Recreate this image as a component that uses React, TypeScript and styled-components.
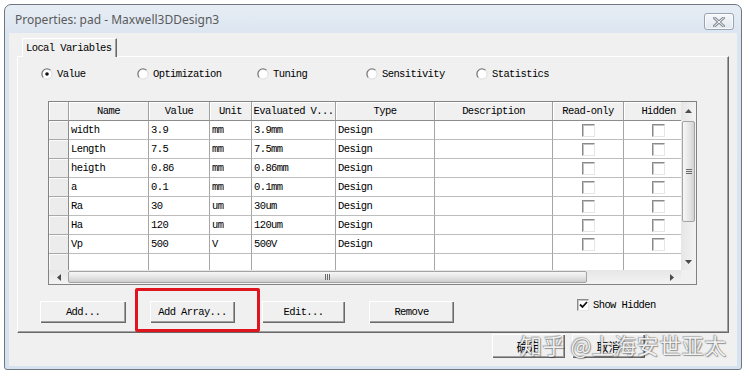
import React from 'react';
import styled, { createGlobalStyle } from 'styled-components';

const MONO = `'Liberation Mono', 'DejaVu Sans Mono', monospace`;
const CJK = `'Noto Sans CJK SC', 'Noto Sans', sans-serif`;

const GlobalStyle = createGlobalStyle`
  html, body {
    margin: 0;
    padding: 0;
    background: #ffffff;
  }
  body {
    font-family: ${MONO};
  }
`;

const radios = [
  { label: 'Value', w: 96, checked: true },
  { label: 'Optimization', w: 120 },
  { label: 'Tuning', w: 109 },
  { label: 'Sensitivity', w: 110 },
  { label: 'Statistics', w: 110 },
];

const headers = ['', 'Name', 'Value', 'Unit', 'Evaluated V...', 'Type', 'Description', 'Read-only', 'Hidden'];

const rows = [
  ['width', '3.9', 'mm', '3.9mm'],
  ['Length', '7.5', 'mm', '7.5mm'],
  ['heigth', '0.86', 'mm', '0.86mm'],
  ['a', '0.1', 'mm', '0.1mm'],
  ['Ra', '30', 'um', '30um'],
  ['Ha', '120', 'um', '120um'],
  ['Vp', '500', 'V', '500V'],
];

function RadioIcon({ checked }: { checked?: boolean }) {
  return (
    <svg width="12" height="12" viewBox="0 0 12 12">
      <circle cx="6" cy="6" r="5" fill="#fff" />
      <path d="M9.6 2.4 A5 5 0 0 0 2.4 9.6" fill="none" stroke="#7a7a7a" strokeWidth="1.3" />
      <path d="M9.6 2.4 A5 5 0 0 1 2.4 9.6" fill="none" stroke="#dcdcdc" strokeWidth="1" />
      {checked && <circle cx="6" cy="6" r="1.8" fill="#111" />}
    </svg>
  );
}

function Arrow({ dir }: { dir: 'up' | 'down' | 'left' | 'right' }) {
  const d = {
    up: 'M0 4 L3.5 0 L7 4 Z',
    down: 'M0 0 L7 0 L3.5 4 Z',
    left: 'M4 0 L4 7 L0 3.5 Z',
    right: 'M0 0 L4 3.5 L0 7 Z',
  }[dir];
  const vertical = dir === 'up' || dir === 'down';
  return (
    <svg width={vertical ? 7 : 4} height={vertical ? 4 : 7} viewBox={vertical ? '0 0 7 4' : '0 0 4 7'}>
      <path d={d} fill="#4a4a4a" />
    </svg>
  );
}

function CloseGlyph() {
  return (
    <svg width="12" height="10" viewBox="0 0 12 10">
      <path d="M1.5 1 L10.5 9 M10.5 1 L1.5 9" stroke="#8a919b" strokeWidth="3" strokeLinecap="square" />
      <path d="M1.5 1 L10.5 9 M10.5 1 L1.5 9" stroke="#f4f6f9" strokeWidth="1" strokeLinecap="square" />
    </svg>
  );
}

function CheckMark() {
  return (
    <svg width="9" height="8" viewBox="0 0 9 8">
      <path d="M1 3.5 L3.5 6 L8 1" fill="none" stroke="#111" strokeWidth="1.8" />
    </svg>
  );
}

export default function App() {
  return (
    <>
      <GlobalStyle />
      <Window>
        <TitleBar>
          <TitleText>Properties: pad - Maxwell3DDesign3</TitleText>
          <CloseButton>
            <CloseGlyph />
          </CloseButton>
        </TitleBar>
        <Client>
          <Tab>Local Variables</Tab>
          <Panel>
            <RadioRow>
              {radios.map(r => (
                <RadioItem key={r.label} $w={r.w}>
                  <RadioIcon checked={r.checked} />
                  <span>{r.label}</span>
                </RadioItem>
              ))}
            </RadioRow>
            <GridFrame>
              <Viewport>
                <Table>
                  {headers.map((h, i) => (
                    <HeadCell key={'h' + i}>{h}</HeadCell>
                  ))}
                  {rows.map(r => (
                    <React.Fragment key={r[0]}>
                      <RowHead />
                      {r.map((v, i) => (
                        <Cell key={i}>{v}</Cell>
                      ))}
                      <Cell>Design</Cell>
                      <Cell />
                      <CheckCell>
                        <Box />
                      </CheckCell>
                      <CheckCell>
                        <Box />
                      </CheckCell>
                    </React.Fragment>
                  ))}
                  <RowHead />
                  {Array.from({ length: 8 }).map((_, i) => (
                    <Cell key={'e' + i} />
                  ))}
                </Table>
              </Viewport>
              <VScroll>
                <ArrowButton $h={17}>
                  <Arrow dir="up" />
                </ArrowButton>
                <VThumb>
                  <VGrip>
                    <span />
                    <span />
                    <span />
                  </VGrip>
                </VThumb>
                <Track />
                <ArrowButton $h={17}>
                  <Arrow dir="down" />
                </ArrowButton>
              </VScroll>
              <HScroll>
                <ArrowButton $w={19}>
                  <Arrow dir="left" />
                </ArrowButton>
                <HThumb>
                  <HGrip>
                    <span />
                    <span />
                    <span />
                  </HGrip>
                </HThumb>
                <Track />
                <ArrowButton $w={18}>
                  <Arrow dir="right" />
                </ArrowButton>
              </HScroll>
              <Corner />
            </GridFrame>
            <ButtonRow>
              <Button $w={86}>Add...</Button>
              <Button $w={85} $ml={24}>Add Array...</Button>
              <Button $w={83} $ml={27}>Edit...</Button>
              <Button $w={85} $ml={24}>Remove</Button>
              <ShowHidden>
                <CheckBox>
                  <CheckMark />
                </CheckBox>
                <span>Show Hidden</span>
              </ShowHidden>
            </ButtonRow>
            <RedMark />
          </Panel>
          <DialogButtons>
            <DialogButton>确定</DialogButton>
            <DialogButton>取消</DialogButton>
          </DialogButtons>
          <Watermark>知乎 @上海安世亚太</Watermark>
        </Client>
      </Window>
    </>
  );
}

const Window = styled.div`
  margin: 4px 0 0 4px;
  width: 738px;
  height: 366px;
  box-sizing: border-box;
  border: 1px solid #6f7782;
  border-radius: 7px 7px 3px 3px;
  background: linear-gradient(#e7edf4, #dbe5f0 30px, #d6e2ef);
  display: flex;
  flex-direction: column;
  overflow: hidden;
`;
const TitleBar = styled.div`
  height: 28px;
  flex: none;
  display: flex;
  justify-content: space-between;
  align-items: flex-start;
`;
const TitleText = styled.div`
  padding: 7px 0 0 10px;
  font-family: 'Noto Sans', sans-serif;
  font-size: 12px;
  line-height: 16px;
  color: #5a5a5a;
`;
const CloseButton = styled.div`
  margin: 8px 7px 0 0;
  width: 30px;
  height: 17px;
  box-sizing: border-box;
  border: 1px solid #97a3b3;
  border-radius: 3px;
  background: linear-gradient(#f6f8fb, #e2e8ef);
  box-shadow: inset 0 0 0 1px rgba(255, 255, 255, 0.7);
  display: flex;
  align-items: center;
  justify-content: center;
`;
const Client = styled.div`
  position: relative;
  flex: 1;
  margin: 0 4px 3px;
  padding: 5px 8px 0;
  background: #f0f0f0;
  display: flex;
  flex-direction: column;
  font-family: ${MONO};
  font-size: 10.5px;
  letter-spacing: -0.6px;
  color: #000;
`;
const Tab = styled.div`
  position: relative;
  z-index: 1;
  align-self: flex-start;
  margin: 0 0 -1px 5px;
  width: 95px;
  height: 19px;
  box-sizing: border-box;
  padding: 3px 0 0 3px;
  background: #f0f0f0;
  border-top: 1px solid #fff;
  border-left: 1px solid #fff;
  border-right: 1px solid #696969;
  box-shadow: inset -1px 0 #a0a0a0;
  line-height: 13px;
`;
const Panel = styled.div`
  position: relative;
  height: 277px;
  box-sizing: border-box;
  border: 1px solid;
  border-color: #fff #696969 #696969 #fff;
  box-shadow: inset -1px -1px #a0a0a0;
`;
const RadioRow = styled.div`
  margin: 10px 0 0 23px;
  height: 14px;
  display: flex;
  align-items: center;
`;
const RadioItem = styled.div<{ $w: number }>`
  width: ${p => p.$w}px;
  display: flex;
  align-items: center;
  gap: 4px;
  & span {
    line-height: 12px;
  }
`;
const GridFrame = styled.div`
  margin: 20px 0 0 30px;
  width: 649px;
  height: 184px;
  box-sizing: border-box;
  border: 1px solid #838383;
  display: grid;
  grid-template-columns: 632px 15px;
  grid-template-rows: 168px 14px;
`;
const Viewport = styled.div`
  overflow: hidden;
  background: #fff;
`;
const Table = styled.div`
  width: 645px;
  display: grid;
  grid-template-columns: 20px 80px 61px 42px 84px 99px 118px 71px 70px;
  grid-auto-rows: 19px;
`;
const HeadCell = styled.div`
  box-sizing: border-box;
  background: #f0f0f0;
  border-right: 1px solid #a0a0a0;
  border-bottom: 1px solid #8c8c8c;
  box-shadow: inset 1px 1px #fff;
  text-align: center;
  line-height: 18px;
  white-space: nowrap;
  overflow: hidden;
`;
const RowHead = styled.div`
  box-sizing: border-box;
  background: #ececec;
  border-right: 1px solid #8c8c8c;
  border-bottom: 1px solid #a8a8a8;
  box-shadow: inset 1px 1px #fbfbfb;
`;
const Cell = styled.div`
  box-sizing: border-box;
  padding-left: 2px;
  border-right: 1px solid #a6a6a6;
  border-bottom: 1px solid #bdbdbd;
  line-height: 18px;
  white-space: nowrap;
  overflow: hidden;
`;
const CheckCell = styled(Cell)`
  padding: 0;
  display: flex;
  align-items: center;
  justify-content: center;
`;
const Box = styled.div`
  width: 13px;
  height: 13px;
  box-sizing: border-box;
  background: #fff;
  border: 1px solid;
  border-color: #8a8a8a #e6e6e6 #e6e6e6 #8a8a8a;
  box-shadow: inset 1px 1px #c4c4c4;
`;
const VScroll = styled.div`
  display: flex;
  flex-direction: column;
  background: linear-gradient(90deg, #e6e6e6, #f3f3f3);
`;
const HScroll = styled.div`
  display: flex;
  background: linear-gradient(#e6e6e6, #f3f3f3);
`;
const ArrowButton = styled.div<{ $w?: number; $h?: number }>`
  flex: none;
  width: ${p => (p.$w ? `${p.$w}px` : 'auto')};
  height: ${p => (p.$h ? `${p.$h}px` : 'auto')};
  display: flex;
  align-items: center;
  justify-content: center;
`;
const Track = styled.div`
  flex: 1;
`;
const VThumb = styled.div`
  margin: 2px 1px 0;
  height: 101px;
  box-sizing: border-box;
  border: 1px solid #a3a3a3;
  border-radius: 2px;
  background: linear-gradient(90deg, #f7f7f7, #e4e4e4 60%, #d2d2d2);
  display: flex;
  align-items: center;
  justify-content: center;
`;
const VGrip = styled.div`
  display: flex;
  flex-direction: column;
  gap: 1px;
  & span {
    width: 6px;
    height: 1px;
    background: #6a6a6a;
  }
`;
const HThumb = styled.div`
  margin: 1px 0;
  width: 519px;
  box-sizing: border-box;
  border: 1px solid #a3a3a3;
  border-radius: 2px;
  background: linear-gradient(#f7f7f7, #e4e4e4 55%, #cdcdcd);
  display: flex;
  align-items: center;
  justify-content: center;
`;
const HGrip = styled.div`
  display: flex;
  gap: 1px;
  & span {
    width: 1px;
    height: 6px;
    background: #6a6a6a;
  }
`;
const Corner = styled.div`
  background: #f0f0f0;
`;
const ButtonRow = styled.div`
  margin: 16px 0 0 22px;
  display: flex;
  align-items: flex-start;
`;
const Button = styled.div<{ $w: number; $ml?: number }>`
  width: ${p => p.$w}px;
  margin-left: ${p => p.$ml || 0}px;
  height: 22px;
  box-sizing: border-box;
  background: #f0f0f0;
  box-shadow: inset 1px 1px #fff, inset -1px -1px #696969, inset -2px -2px #a0a0a0;
  display: flex;
  align-items: center;
  justify-content: center;
`;
const ShowHidden = styled.div`
  margin: -2px 0 0 123px;
  display: flex;
  align-items: center;
  gap: 4px;
`;
const CheckBox = styled(Box)`
  width: 12px;
  height: 12px;
  display: flex;
  align-items: center;
  justify-content: center;
`;
const RedMark = styled.div`
  position: absolute;
  left: 117px;
  top: 231px;
  width: 125px;
  height: 44px;
  box-sizing: border-box;
  border: 3px solid #e0141c;
  border-radius: 2px;
  pointer-events: none;
`;
const DialogButtons = styled.div`
  margin-top: 1px;
  padding-right: 84px;
  display: flex;
  justify-content: flex-end;
  gap: 7px;
`;
const DialogButton = styled.div`
  width: 73px;
  height: 24px;
  box-sizing: border-box;
  background: #f0f0f0;
  box-shadow: inset 1px 1px #fff, inset -1px -1px #696969, inset -2px -2px #a0a0a0;
  display: flex;
  align-items: center;
  justify-content: center;
  font-family: ${CJK};
  font-size: 12px;
  letter-spacing: 0;
`;
const Watermark = styled.div`
  position: absolute;
  left: 511px;
  top: 296px;
  font-family: ${CJK};
  font-size: 22px;
  line-height: 30px;
  letter-spacing: 0.5px;
  white-space: nowrap;
  color: rgba(255, 255, 255, 0.92);
  text-shadow: 0 0 1px #555, 1px 1px 1px rgba(0, 0, 0, 0.35), -1px -1px 1px rgba(0, 0, 0, 0.2);
  pointer-events: none;
`;
